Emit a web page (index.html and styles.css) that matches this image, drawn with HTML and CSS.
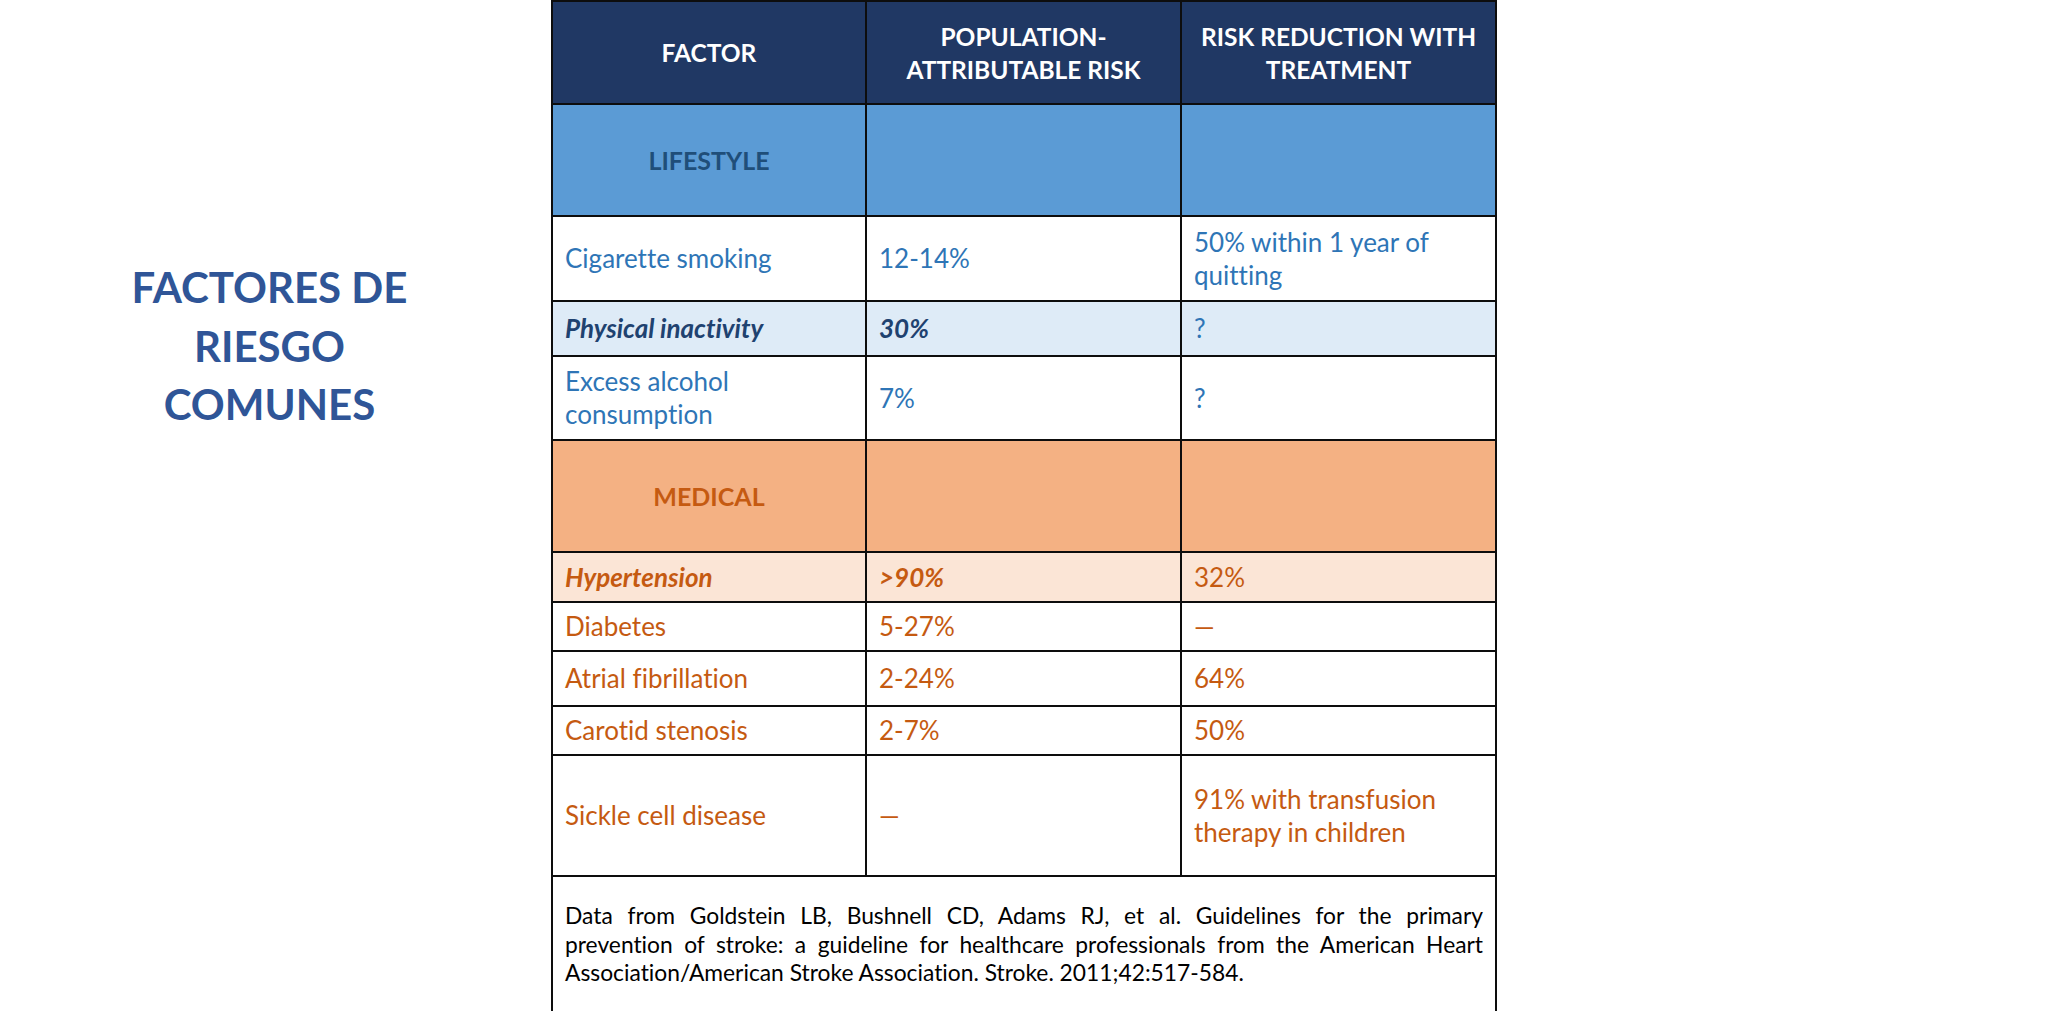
FILE: index.html
```html
<!DOCTYPE html>
<html lang="en">
<head>
<meta charset="utf-8">
<title>Factores de riesgo comunes</title>
<link rel="stylesheet" href="styles.css">
</head>
<body>
<div class="slide">
  <div class="side">
    <h1 class="title">FACTORES DE<br>RIESGO<br>COMUNES</h1>
  </div>
  <div class="table">
    <div class="cell head">FACTOR</div>
    <div class="cell head">POPULATION-<br>ATTRIBUTABLE RISK</div>
    <div class="cell head">RISK REDUCTION WITH<br>TREATMENT</div>

    <div class="cell sec-life center">LIFESTYLE</div>
    <div class="cell sec-life"></div>
    <div class="cell sec-life"></div>

    <div class="cell life">Cigarette smoking</div>
    <div class="cell life">12-14%</div>
    <div class="cell life">50% within 1 year of<br>quitting</div>

    <div class="cell life-hi strong">Physical inactivity</div>
    <div class="cell life-hi strong">30%</div>
    <div class="cell life-hi">?</div>

    <div class="cell life">Excess alcohol<br>consumption</div>
    <div class="cell life">7%</div>
    <div class="cell life">?</div>

    <div class="cell sec-med center">MEDICAL</div>
    <div class="cell sec-med"></div>
    <div class="cell sec-med"></div>

    <div class="cell med-hi strong">Hypertension</div>
    <div class="cell med-hi strong">&gt;90%</div>
    <div class="cell med-hi">32%</div>

    <div class="cell med">Diabetes</div>
    <div class="cell med">5-27%</div>
    <div class="cell med">—</div>

    <div class="cell med">Atrial fibrillation</div>
    <div class="cell med">2-24%</div>
    <div class="cell med">64%</div>

    <div class="cell med">Carotid stenosis</div>
    <div class="cell med">2-7%</div>
    <div class="cell med">50%</div>

    <div class="cell med">Sickle cell disease</div>
    <div class="cell med">—</div>
    <div class="cell med">91% with transfusion<br>therapy in children</div>

    <div class="cell note">
      <p class="note-text">
        <span class="line">Data from Goldstein LB, Bushnell CD, Adams RJ, et al. Guidelines for the primary</span>
        <span class="line">prevention of stroke: a guideline for healthcare professionals from the American Heart</span>
        <span class="line last">Association/American Stroke Association. Stroke. 2011;42:517-584.</span>
      </p>
    </div>
  </div>
</div>
</body>
</html>
```

FILE: styles.css
```css
* { box-sizing: border-box; }
html, body {
  margin: 0;
  padding: 0;
  background: #ffffff;
  overflow: hidden;
}
body {
  font-family: "Lato", "Open Sans", sans-serif;
  font-variant-ligatures: none;
}
.slide {
  width: 2048px;
  height: 1011px;
  display: flex;
  align-items: flex-start;
}
.side {
  width: 551px;
  padding-top: 258px;
  padding-right: 12px;
  display: flex;
  justify-content: center;
}
.title {
  margin: 0;
  font-size: 42px;
  font-weight: 700;
  line-height: 58.5px;
  color: #2f5597;
  text-align: center;
}
.table {
  display: grid;
  grid-template-columns: 312px 313px 313px;
  grid-template-rows: 101px 110px 83px 53px 82px 110px 48px 47px 53px 47px 119px 134px;
  gap: 2px;
  padding: 2px;
  background: #0d0d0d;
  width: 946px;
}
.cell {
  display: flex;
  align-items: center;
  padding: 0 12px;
  font-size: 26px;
  line-height: 33px;
  background: #ffffff;
}
.center { justify-content: center; }
.head {
  background: #203864;
  color: #ffffff;
  font-weight: 700;
  font-size: 24.5px;
  justify-content: center;
  text-align: center;
}
.sec-life {
  background: #5b9bd5;
  color: #1f4e79;
  font-weight: 700;
  font-size: 25px;
}
.life { color: #2e75b6; }
.life-hi {
  background: #deebf7;
  color: #2e75b6;
}
.life-hi.strong {
  color: #1f4270;
  font-weight: 700;
  font-style: italic;
}
.sec-med {
  background: #f4b183;
  color: #c55a11;
  font-weight: 700;
  font-size: 25px;
}
.med { color: #c55a11; }
.med-hi {
  background: #fbe5d6;
  color: #c55a11;
}
.med-hi.strong {
  font-weight: 700;
  font-style: italic;
}
.note {
  grid-column: 1 / 4;
  color: #000000;
  font-size: 22.8px;
  line-height: 28.5px;
}
.note-text {
  margin: 0;
  width: 100%;
}
.line {
  display: block;
  text-align: justify;
  text-align-last: justify;
}
.line.last {
  text-align: left;
  text-align-last: left;
}
```
